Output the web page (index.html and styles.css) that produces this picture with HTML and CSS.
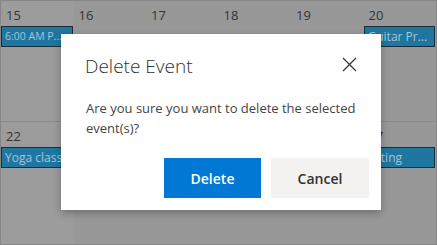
FILE: index.html
```html
<!DOCTYPE html>
<html>
<head>
<meta charset="utf-8">
<link rel="stylesheet" href="styles.css">
</head>
<body>
<div class="calendar">
  <div class="cell weekend top"><div class="date">15</div><div class="event small">6:00 AM P...</div></div>
  <div class="cell top"><div class="date">16</div></div>
  <div class="cell top"><div class="date">17</div></div>
  <div class="cell top"><div class="date">18</div></div>
  <div class="cell top"><div class="date">19</div></div>
  <div class="cell top"><div class="date">20</div><div class="event">Guitar Pr...</div></div>
  <div class="cell weekend"><div class="date">22</div><div class="event">Yoga class</div></div>
  <div class="cell"></div>
  <div class="cell"></div>
  <div class="cell"></div>
  <div class="cell"></div>
  <div class="cell"><div class="date">27</div><div class="event">Eating</div></div>
</div>

<div class="dialog">
  <div class="dialog-header">
    <div class="dialog-title">Delete Event</div>
    <svg class="close" width="15" height="15" viewBox="0 0 15 15"><path d="M1 1 L14 14 M14 1 L1 14" stroke="#3a3a3a" stroke-width="1.3" fill="none"/></svg>
  </div>
  <div class="dialog-body">Are you sure you want to delete the selected event(s)?</div>
  <div class="dialog-footer">
    <button class="btn primary">Delete</button>
    <button class="btn secondary">Cancel</button>
  </div>
</div>
</body>
</html>
```
FILE: styles.css
```css
html, body {
  margin: 0;
  padding: 0;
}
body {
  width: 437px;
  height: 245px;
  overflow: hidden;
  font-family: "Open Sans", "Noto Sans", sans-serif;
  position: relative;
  background: #989898;
}
.calendar {
  box-sizing: border-box;
  width: 437px;
  height: 245px;
  border: 1px solid #858585;
  display: grid;
  grid-template-columns: repeat(6, 1fr);
  grid-template-rows: 121px 1fr;
  background: #989898;
}
.cell {
  padding-top: 5px;
  min-width: 0;
}
.cell.top {
  border-bottom: 1px solid #8a8a8a;
}
.weekend {
  background: #9c9c9c;
}
.date {
  font-size: 13px;
  line-height: 18px;
  color: #333;
  padding-left: 5px;
}
.event {
  margin-top: 2px;
  margin-right: 1px;
  box-sizing: border-box;
  height: 21px;
  border: 1px solid #1b2d38;
  background: #1f77a1;
  color: #a6c5d6;
  font-size: 12px;
  line-height: 19px;
  padding-left: 3px;
  white-space: nowrap;
  overflow: hidden;
}
.event.small {
  font-size: 10.5px;
}
.dialog {
  position: absolute;
  left: 61px;
  top: 34px;
  width: 320px;
  height: 176px;
  box-sizing: border-box;
  background: #fff;
  box-shadow: 0 3px 8px rgba(0, 0, 0, 0.28);
  display: flex;
  flex-direction: column;
}
.dialog-header {
  display: flex;
  justify-content: space-between;
  align-items: flex-start;
  padding: 18px 24px 0 24px;
}
.dialog-title {
  font-size: 19px;
  font-weight: 300;
  line-height: 28px;
  color: #323130;
}
.close {
  margin-top: 5px;
}
.dialog-body {
  padding: 18px 24px 0 25px;
  font-size: 13px;
  line-height: 20px;
  color: #444;
}
.dialog-footer {
  margin-top: auto;
  display: flex;
  justify-content: flex-end;
  gap: 10px;
  padding: 0 12px 12px 0;
}
.btn {
  height: 40px;
  border: none;
  font-family: "Open Sans", "Noto Sans", sans-serif;
  font-size: 14px;
  font-weight: 600;
  padding: 0;
}
.primary {
  width: 97px;
  background: #0078d4;
  color: #fff;
}
.secondary {
  width: 98px;
  background: #f3f2f1;
  color: #323130;
}
```
